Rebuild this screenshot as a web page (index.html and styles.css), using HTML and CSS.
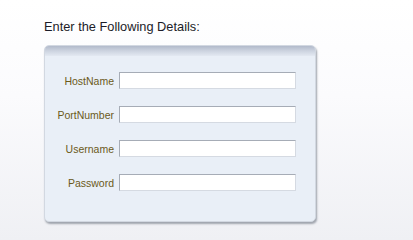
FILE: index.html
```html
<!DOCTYPE html>
<html>
  <head>
    <meta charset="utf-8">
    <title>Connection details</title>
    <link rel="stylesheet" href="styles.css">
  </head>
  <body>
    <div class="title">Enter the Following Details:</div>
    <div class="panel">
      <div class="panel-head"></div>
      <div class="panel-body">
        <div class="row">
          <label for="host">HostName</label>
          <input id="host" type="text">
        </div>
        <div class="row">
          <label for="port">PortNumber</label>
          <input id="port" type="text">
        </div>
        <div class="row">
          <label for="user">Username</label>
          <input id="user" type="text">
        </div>
        <div class="row">
          <label for="pass">Password</label>
          <input id="pass" type="password">
        </div>
      </div>
    </div>
  </body>
</html>
```

FILE: styles.css
```css
*, *:before, *:after {
  box-sizing: border-box;
}
html, body {
  margin: 0;
  padding: 0;
}
body {
  width: 413px;
  height: 240px;
  overflow: hidden;
  padding: 19px 0 0 44px;
  font-family: "Liberation Sans", Arial, sans-serif;
  background: linear-gradient(to bottom, #ffffff 0%, #fbfbfd 40%, #eff0f4 100%);
}
.title {
  font-size: 12.8px;
  line-height: 16px;
  color: #1c1c28;
}
.panel {
  margin-top: 10px;
  width: 272px;
  height: 177px;
  border-radius: 5px;
  background: #e9eff7;
  border: 1px solid #d2d8e1;
  box-shadow: 1px 2px 2px #9fa4ad;
  overflow: hidden;
}
.panel-head {
  height: 10px;
  background: linear-gradient(to bottom, #b2bacb 0%, #cdd4e0 50%, #e3e9f2 100%);
}
.panel-body {
  display: flex;
  flex-direction: column;
  gap: 17px;
  padding: 16px 0 0 0;
}
.row {
  display: flex;
  align-items: center;
  height: 17px;
}
label {
  width: 70px;
  padding-right: 1px;
  text-align: right;
  font-size: 10.5px;
  color: #6b5a1a;
}
input {
  width: 177px;
  height: 17px;
  margin: 0 0 0 4px;
  padding: 0 2px;
  background: #fff;
  border: 1px solid;
  border-color: #a6acb6 #d5dae2 #d5dae2 #a6acb6;
  outline: none;
}
```
